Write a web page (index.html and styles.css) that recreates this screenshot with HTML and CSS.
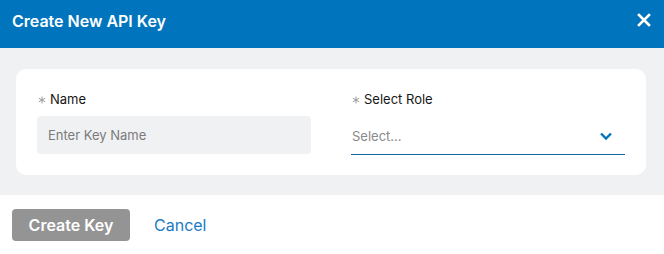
FILE: index.html
```html
<!DOCTYPE html>
<html lang="en">
<head>
<meta charset="UTF-8">
<meta name="viewport" content="width=device-width, initial-scale=1.0">
<title>Create New API Key</title>
<link rel="stylesheet" href="styles.css">
</head>
<body>
    <div class="modal">
        <div class="modal-header">
            <h1 class="modal-title">Create New API Key</h1>
            <button class="close-btn" aria-label="Close">
                <svg width="14" height="14" viewBox="0 0 14 14">
                    <path d="M2 2 L12 12 M12 2 L2 12" stroke="#fff" stroke-width="2.6" stroke-linecap="square"/>
                </svg>
            </button>
        </div>
        <div class="modal-body">
            <div class="card">
                <div class="field">
                    <label class="label">
                        <svg class="req" width="8" height="8" viewBox="0 0 8 8">
                            <path d="M4 0.5 V7.5 M0.8 2.2 L7.2 5.8 M0.8 5.8 L7.2 2.2" stroke="#9a9a9a" stroke-width="1"/>
                        </svg>
                        Name
                    </label>
                    <input class="text-input" type="text" placeholder="Enter Key Name">
                </div>
                <div class="field">
                    <label class="label">
                        <svg class="req" width="8" height="8" viewBox="0 0 8 8">
                            <path d="M4 0.5 V7.5 M0.8 2.2 L7.2 5.8 M0.8 5.8 L7.2 2.2" stroke="#9a9a9a" stroke-width="1"/>
                        </svg>
                        Select Role
                    </label>
                    <div class="select">
                        <span class="select-placeholder">Select...</span>
                        <svg width="14" height="10" viewBox="0 0 14 10">
                            <path d="M2 2.5 L7 7.5 L12 2.5" fill="none" stroke="#0075be" stroke-width="2.4"/>
                        </svg>
                    </div>
                </div>
            </div>
        </div>
        <div class="modal-footer">
            <button class="btn btn-primary" disabled>Create Key</button>
            <button class="btn btn-link">Cancel</button>
        </div>
    </div>
</body>
</html>
```

FILE: styles.css
```css
body{
    margin: 0;
    font-family: Inter, "Noto Sans", sans-serif;
    background-color: #fff;
}
.modal{
    width: 664px;
}
.modal-header{
    display: flex;
    justify-content: space-between;
    align-items: center;
    height: 48px;
    padding: 0 13px 0 12px;
    background-color: #0075be;
    box-sizing: border-box;
}
.modal-title{
    margin: 0;
    margin-top: -6px;
    font-size: 16px;
    font-weight: 600;
    color: #fff;
}
.close-btn{
    display: flex;
    background: none;
    border: none;
    padding: 0;
    margin-top: -8px;
    cursor: pointer;
}
.modal-body{
    background-color: #f0f1f3;
    padding: 21px 18px 20px 16px;
}
.card{
    display: grid;
    grid-template-columns: 274px 274px;
    gap: 40px;
    background-color: #fff;
    border-radius: 10px;
    padding: 21px 21px 21px 21px;
    height: 64px;
}
.field{
    display: flex;
    flex-direction: column;
}
.label{
    display: flex;
    align-items: center;
    font-size: 13px;
    color: #161616;
    height: 18px;
    margin-bottom: 8px;
}
.req{
    margin: 1px 4px 0 1px;
}
.text-input{
    height: 38px;
    border: none;
    border-radius: 4px;
    background-color: #f0f1f3;
    padding: 0 11px;
    font-family: inherit;
    font-size: 13px;
    box-sizing: border-box;
    outline: none;
}
.text-input::placeholder{
    color: #7b7b7b;
}
.select{
    display: flex;
    justify-content: space-between;
    align-items: center;
    height: 37px;
    border-bottom: 1px solid #0a69a6;
    padding: 0 12px 0 1px;
    margin-top: 1px;
}
.select-placeholder{
    font-size: 13px;
    color: #8a8a8a;
}
.modal-footer{
    display: flex;
    align-items: center;
    gap: 24px;
    padding: 14px 12px;
}
.btn{
    font-family: inherit;
    font-size: 16px;
    border: none;
    cursor: pointer;
}
.btn-primary{
    width: 118px;
    height: 32px;
    border-radius: 4px;
    background-color: #949494;
    color: #fff;
    font-weight: 600;
}
.btn-link{
    background: none;
    padding: 0;
    color: #1a7ac4;
}
```
